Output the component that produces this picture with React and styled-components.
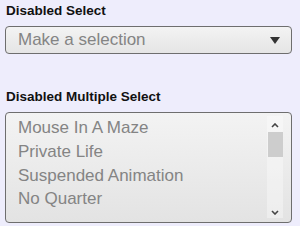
import styled, { createGlobalStyle } from 'styled-components';

const GlobalStyle = createGlobalStyle`
  html, body {
    margin: 0;
    padding: 0;
    background: #eeedfc;
    font-family: "Liberation Sans", Arial, sans-serif;
  }
`;

const songs = ['Mouse In A Maze', 'Private Life', 'Suspended Animation', 'No Quarter'];

const App = () => {
  return (
    <Page>
      <GlobalStyle />
      <Field>
        <Label>Disabled Select</Label>
        <SelectBox>
          <Placeholder>Make a selection</Placeholder>
          <Caret width="10" height="7" viewBox="0 0 10 7">
            <path d="M0 0 H10 L5 7 Z" fill="#333" />
          </Caret>
        </SelectBox>
      </Field>
      <Field $gap>
        <Label>Disabled Multiple Select</Label>
        <ListBox>
          <Options>
            {songs.map((song) => (
              <Option key={song}>{song}</Option>
            ))}
          </Options>
          <Scrollbar>
            <svg width="8" height="5" viewBox="0 0 8 5">
              <path d="M1 4 L4 1 L7 4" stroke="#444" strokeWidth="1.6" fill="none" />
            </svg>
            <Thumb />
            <Track />
            <svg width="8" height="5" viewBox="0 0 8 5">
              <path d="M1 1 L4 4 L7 1" stroke="#444" strokeWidth="1.6" fill="none" />
            </svg>
          </Scrollbar>
        </ListBox>
      </Field>
    </Page>
  );
};

export default App;

const Page = styled.div`
  padding: 3px 8px 0 5px;
  display: flex;
  flex-direction: column;
`;

const Field = styled.div`
  display: flex;
  flex-direction: column;
  gap: 7px;
  margin-top: ${(p) => (p.$gap ? '35px' : '0')};
`;

const Label = styled.div`
  font-size: 13.5px;
  line-height: 16px;
  font-weight: bold;
  color: #111;
  padding-left: 1px;
`;

const SelectBox = styled.div`
  height: 26px;
  border: 1px solid #6e6e6e;
  border-radius: 4px;
  background: linear-gradient(#f3f3f3, #e5e5e5);
  display: flex;
  align-items: center;
  justify-content: space-between;
  padding: 0 11px 0 12px;
`;

const Placeholder = styled.span`
  font-size: 17px;
  color: #848484;
`;

const Caret = styled.svg`
  display: block;
`;

const ListBox = styled.div`
  height: 102px;
  border: 1px solid #6e6e6e;
  border-radius: 4px;
  background: linear-gradient(#f3f3f3, #e3e3e3);
  display: flex;
  padding: 3px 8px 4px 12px;
`;

const Options = styled.div`
  flex: 1;
  display: flex;
  flex-direction: column;
`;

const Option = styled.div`
  font-size: 17px;
  line-height: 23.8px;
  color: #848484;
  white-space: nowrap;
`;

const Scrollbar = styled.div`
  width: 16px;
  display: flex;
  flex-direction: column;
  align-items: center;
  gap: 4px;
  padding: 7px 0 3px;
  background: rgba(255, 255, 255, 0.35);
`;

const Thumb = styled.div`
  width: 15px;
  height: 25px;
  background: #cdcdcd;
`;

const Track = styled.div`
  flex: 1;
`;
